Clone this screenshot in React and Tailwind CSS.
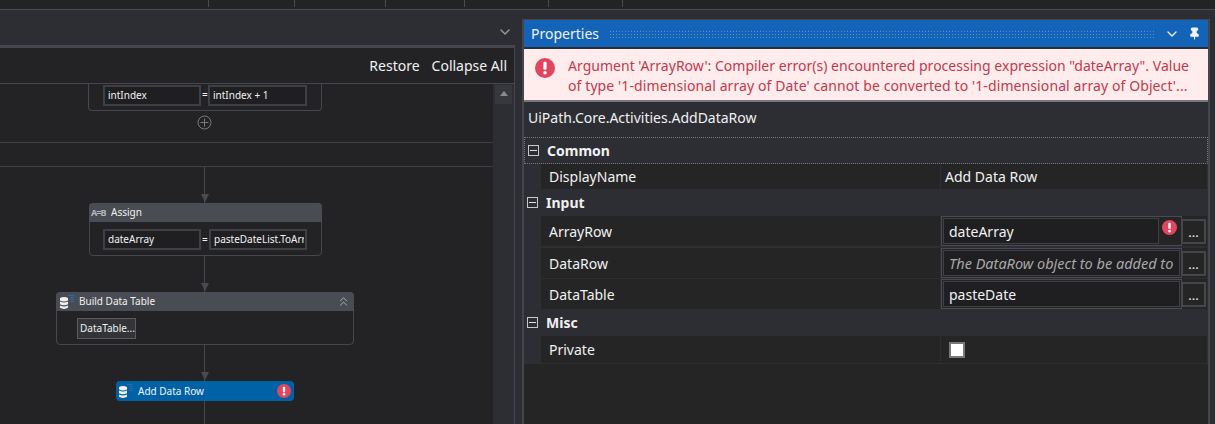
import { ChevronDown, Pin, ChevronsUp } from "lucide-react";

const font = { fontFamily: '"Noto Sans", "Open Sans", sans-serif' };

const ErrorDot = ({ className }) => (
  <svg className={className} viewBox="0 0 20 20">
    <circle cx="10" cy="10" r="10" fill="#e2465f" />
    <rect x="8.4" y="3.8" width="3.2" height="8" rx="1.2" fill="#fff" />
    <circle cx="10" cy="14.8" r="1.8" fill="#fff" />
  </svg>
);

const DbIcon = ({ className }) => (
  <svg className={className} viewBox="0 0 16 16">
    <path d="M9 1.5h6M11 3.5h4M11 5.5h4M11 7.5h4" stroke="#2a6aa8" strokeWidth="1" />
    <path d="M1 4q4-2.2 8 0v2.4q-4 2.2-8 0zM1 7.6q4 2 8 0v2.6q-4 2-8 0zM1 11.4q4 2 8 0v2.4q-4 2.2-8 0z" fill="#f0f0f0" />
  </svg>
);

const Arrow = ({ top }) => (
  <div className="absolute left-[201px] w-0 h-0 border-l-[4px] border-r-[4px] border-t-[8px] border-l-transparent border-r-transparent border-t-[#4a4b52]" style={{ top }} />
);

const Line = ({ top, height }) => (
  <div className="absolute left-[204px] w-px bg-[#46474d]" style={{ top, height }} />
);

const ExprBox = ({ className, children }) => (
  <div className={`absolute h-[21px] border-2 border-[#3f4046] bg-[#1f1f22] pl-[3px] text-[10px] leading-[17px] text-[#f1f1f1] overflow-hidden whitespace-nowrap ${className}`}>
    {children}
  </div>
);

const Canvas = () => (
  <div className="relative flex-1 bg-[#232326] overflow-hidden">
    {/* first assign, cut off at the top */}
    <div className="absolute left-[88px] top-[-1px] w-[234px] h-[28px] border border-t-0 border-[#46474d] rounded-b-sm" />
    <ExprBox className="left-[103px] top-[1px] w-[98px]">intIndex</ExprBox>
    <span className="absolute left-[202px] top-0 text-[10px] leading-[21px] text-[#f1f1f1]">=</span>
    <ExprBox className="left-[208px] top-[1px] w-[99px]">intIndex + 1</ExprBox>
    <svg className="absolute left-[197px] top-[31px] w-[15px] h-[15px]" viewBox="0 0 15 15" fill="none" stroke="#77787c">
      <circle cx="7.5" cy="7.5" r="6.5" />
      <path d="M3.5 7.5h8M7.5 3.5v8" />
    </svg>
    <div className="absolute left-0 right-0 top-[58px] h-px bg-[#3f4046]" />
    <div className="absolute left-0 right-0 top-[82px] h-px bg-[#3f4046]" />

    <Line top={83} height={36} />
    <Arrow top={110} />

    <div className="absolute left-[89px] top-[119px] w-[233px] h-[53px] border border-[#46474d] rounded-sm">
      <div className="flex items-center h-[19px] bg-[#4a4c53] pl-[2px] gap-[5px] -m-px mb-0 rounded-t-sm">
        <span className="w-[15px] text-[9px] font-bold tracking-[-1px] text-[#b5b6b8]">A=B</span>
        <span className="text-[10px] text-[#f1f1f1]">Assign</span>
      </div>
    </div>
    <ExprBox className="left-[103px] top-[145px] w-[98px]">dateArray</ExprBox>
    <span className="absolute left-[202px] top-[145px] text-[10px] leading-[21px] text-[#f1f1f1]">=</span>
    <ExprBox className="left-[209px] top-[145px] w-[98px]">
      <div className="w-[90px] overflow-hidden">pasteDateList.ToArray</div>
    </ExprBox>

    <Line top={172} height={36} />
    <Arrow top={199} />

    <div className="absolute left-[56px] top-[208px] w-[298px] h-[53px] border border-[#46474d] rounded-sm">
      <div className="flex items-center justify-between h-[19px] bg-[#4a4c53] -m-px mb-0 pl-[3px] pr-[3px] rounded-t-sm">
        <div className="flex items-center gap-[4px]">
          <DbIcon className="w-[16px] h-[16px]" />
          <span className="text-[10px] text-[#f1f1f1]">Build Data Table</span>
        </div>
        <ChevronsUp className="w-[15px] h-[15px] text-[#c9c9cb]" strokeWidth={1.25} />
      </div>
    </div>
    <div className="absolute left-[77px] top-[234px] w-[59px] h-[21px] border border-[#5a5b60] bg-[#333438] pl-[2px] text-[10px] leading-[19px] text-[#f1f1f1] whitespace-nowrap overflow-hidden">
      DataTable...
    </div>

    <Line top={261} height={36} />
    <Arrow top={288} />

    <div className="absolute left-[116px] top-[297px] w-[178px] h-[20px] bg-[#0062a6] rounded-sm flex items-center pl-[2px] pr-[3px]">
      <DbIcon className="w-[16px] h-[16px]" />
      <span className="ml-[4px] text-[10px] text-[#f1f1f1]">Add Data Row</span>
      <ErrorDot className="ml-auto w-[14px] h-[14px]" />
    </div>
    <Line top={317} height={30} />
  </div>
);

const LeftPanel = () => (
  <div className="w-[515px] shrink-0 flex flex-col">
    <div className="h-[35px] flex justify-end items-center pr-[2px] pt-[9px]">
      <ChevronDown className="w-[16px] h-[16px] text-[#9a9b9e]" />
    </div>
    <div className="flex-1 flex flex-col border-t-[3px] border-t-[#45464f] border-r border-r-[#45464f] bg-[#232326]">
      <div className="h-[36px] shrink-0 flex justify-end items-center gap-[12px] pr-[7px] border-b border-[#45464f] text-[14px] text-[#f1f1f1]">
        <span>Restore</span>
        <span>Collapse All</span>
      </div>
      <div className="flex-1 flex min-h-0">
        <Canvas />
        <div className="w-[21px] shrink-0 bg-[#2d2e33] pt-px px-[2px]">
          <div className="h-[19px] bg-[#37383d] flex justify-center pt-[6px]">
            <div className="w-0 h-0 border-l-[4px] border-r-[4px] border-b-[5px] border-l-transparent border-r-transparent border-b-[#8a8b8f]" />
          </div>
        </div>
      </div>
    </div>
  </div>
);

const SectionHead = ({ label, h, dotted }) => (
  <div className={`flex items-center pl-[3px] ${dotted ? "border border-dotted border-[#77787c]" : ""}`} style={{ height: h }}>
    <div className="w-[11px] h-[11px] border border-[#c8c8c8] flex items-center justify-center">
      <div className="w-[7px] h-px bg-[#e0e0e0]" />
    </div>
    <span className="ml-[8px] text-[14px] font-bold text-[#f1f1f1]">{label}</span>
  </div>
);

const Row = ({ label, h, children, mb = 0 }) => (
  <div className="flex ml-[17px] mr-px bg-[#252526]" style={{ height: h, marginBottom: mb }}>
    <div className="w-[399px] shrink-0 pl-[8px] flex items-center text-[14px] text-[#f1f1f1]">{label}</div>
    <div className="flex-1 border-l border-[#2d2e33] relative flex items-center">{children}</div>
  </div>
);

const Browse = () => (
  <div className="absolute right-[1px] top-[3px] w-[25px] h-[25px] border-2 border-[#45464c] text-[13px] leading-[22px] text-center text-[#f1f1f1]">...</div>
);

const ValueBox = ({ children, error, italic }) => (
  <>
    <div className="w-[241px] h-[30px] border border-[#4a4b52] p-px flex">
      <div className={`flex-1 min-w-0 border border-[#3f4046] bg-[#1f1f22] pl-[5px] pr-[4px] leading-[25px] ${italic ? "italic text-[14.5px] text-[#a8a8a8]" : "text-[14px] text-[#f1f1f1]"}`}>
        <div className="overflow-hidden whitespace-nowrap">{children}</div>
      </div>
      {error && (
        <div className="w-[21px] shrink-0 flex justify-center pt-[2px]">
          <ErrorDot className="w-[15px] h-[15px]" />
        </div>
      )}
    </div>
    <Browse />
  </>
);

const RightPanel = () => (
  <div className="w-[688px] shrink-0 mt-[9px] flex flex-col border-x-2 border-t border-[#45464c]">
    <div className="h-[27px] shrink-0 bg-[#1364b8] flex items-center pl-[7px] pr-[7px] text-[14px] text-[#f1f1f1]">
      <span>Properties</span>
      <div className="flex-1 h-[8px] ml-[10px] mr-[8px] bg-[radial-gradient(#5b93d1_1px,transparent_1px)] bg-[length:3px_3px]" />
      <ChevronDown className="w-[16px] h-[16px] mr-[8px]" />
      <Pin className="w-[13px] h-[13px] fill-current" />
    </div>
    <div className="h-[53px] shrink-0 mt-[2px] bg-[#ffecec] border-b-[2px] border-[#77787c] flex items-start pl-[11px] pt-[7px]">
      <ErrorDot className="w-[20px] h-[20px] shrink-0 mt-[2px]" />
      <div className="ml-[13px] text-[14px] leading-[20px] text-[#c23a4e] whitespace-nowrap">
        <div className="tracking-[0.02px]">Argument 'ArrayRow': Compiler error(s) encountered processing expression "dateArray". Value</div>
        <div className="tracking-[0.1px]">of type '1-dimensional array of Date' cannot be converted to '1-dimensional array of Object'...</div>
      </div>
    </div>
    <div className="flex-1 flex flex-col bg-[#2d2e33]">
      <div className="h-[35px] shrink-0 pl-[4px] pb-[5px] flex items-center text-[14px] text-[#f1f1f1]">UiPath.Core.Activities.AddDataRow</div>
      <SectionHead label="Common" h={27} dotted />
      <Row label="DisplayName" h={25}>
        <span className="pl-[4px] text-[14px] text-[#f1f1f1]">Add Data Row</span>
      </Row>
      <SectionHead label="Input" h={27} />
      <Row label="ArrayRow" h={30} mb={2}>
        <ValueBox error>dateArray</ValueBox>
      </Row>
      <Row label="DataRow" h={30} mb={1}>
        <ValueBox italic>The DataRow object to be added to</ValueBox>
      </Row>
      <Row label="DataTable" h={30}>
        <ValueBox>pasteDate</ValueBox>
      </Row>
      <SectionHead label="Misc" h={27} />
      <Row label="Private" h={27}>
        <div className="ml-[8px] w-[16px] h-[16px] bg-white border-2 border-[#77787c]" />
      </Row>
      <div className="flex-1 bg-[#252526] mt-px" />
    </div>
  </div>
);

export default function App() {
  return (
    <div className="w-[1215px] h-[424px] overflow-hidden bg-[#2d2e33] flex flex-col" style={font}>
      <div className="h-[10px] shrink-0 bg-[#232326] border-b border-[#4a4b50] flex">
        <div className="w-[209px] border-r border-[#4a4b50] h-[7px]" />
        <div className="w-[86px] border-r border-[#4a4b50] h-[7px]" />
        <div className="w-[91px] border-r border-[#4a4b50] h-[7px]" />
        <div className="w-[79px] border-r border-[#4a4b50] h-[7px]" />
        <div className="w-[84px] border-r border-[#4a4b50] h-[7px]" />
        <div className="w-[74px] border-r border-[#4a4b50] h-[7px]" />
      </div>
      <div className="flex-1 flex min-h-0">
        <LeftPanel />
        <div className="w-[7px] shrink-0" />
        <RightPanel />
      </div>
    </div>
  );
}
